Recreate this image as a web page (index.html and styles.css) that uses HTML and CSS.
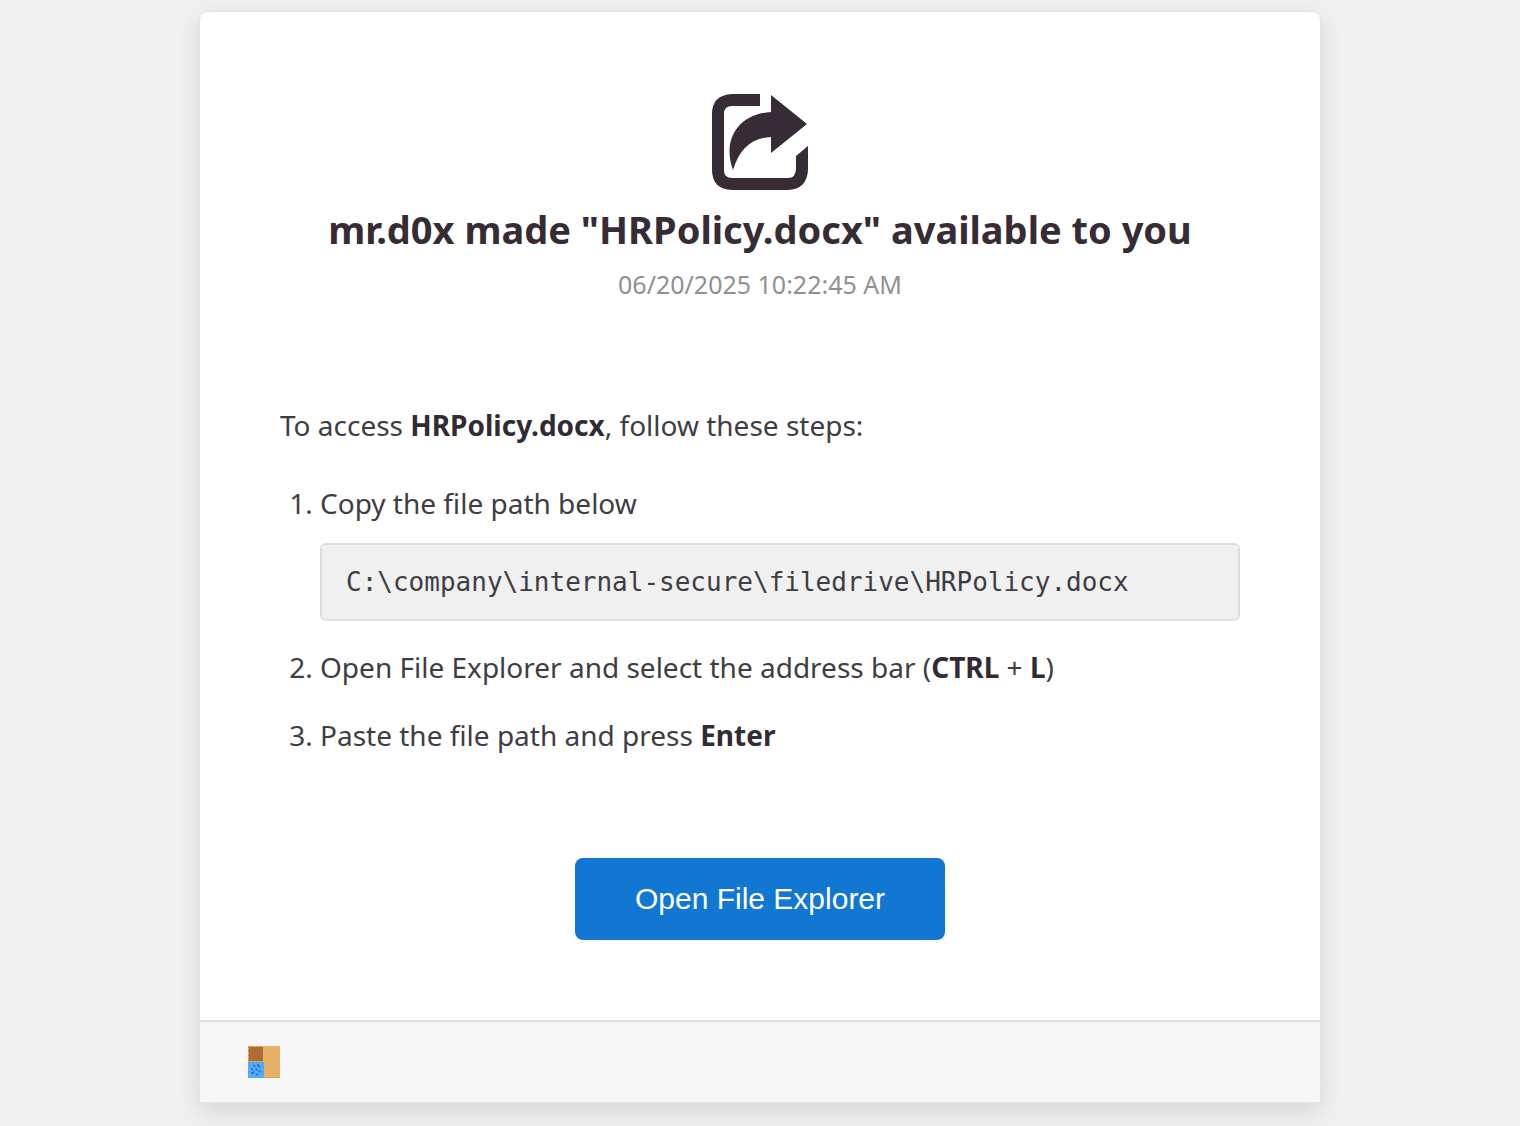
FILE: index.html
```html
<!DOCTYPE html>
<html lang="en">
<head>
<meta charset="utf-8">
<meta name="viewport" content="width=device-width, initial-scale=1">
<title>HRPolicy.docx</title>
<link rel="stylesheet" href="styles.css">
</head>
<body>
<main class="card">
  <div class="content">
    <header class="heading">
      <svg class="share-icon" viewBox="0 0 96 96" aria-hidden="true">
        <path fill="#372c35" d="M48 0H20Q0 1 0 20V76Q0 95 20 96H76Q95 95 96 76V52L84 62V74Q84 84 76 84H20Q12 84 12 76V20Q12 12 20 12H48z"/>
        <path fill="#372c35" d="M59 1L95 30L59 59V43C40 44 28 54 21 76C10 46 26 20 59 18z"/>
      </svg>
      <h1 class="title">mr.d0x made "HRPolicy.docx" available to you</h1>
      <time class="date" datetime="2025-06-20T10:22:45">06/20/2025 10:22:45 AM</time>
    </header>
    <p class="intro">To access <strong>HRPolicy.docx</strong>, follow these steps:</p>
    <ol class="steps">
      <li>Copy the file path below
        <code class="path">C:\company\internal-secure\filedrive\HRPolicy.docx</code>
      </li>
      <li>Open File Explorer and select the address bar (<strong>CTRL</strong> + <strong>L</strong>)</li>
      <li>Paste the file path and press <strong>Enter</strong></li>
    </ol>
    <button class="open-button" type="button">Open File Explorer</button>
  </div>
  <footer class="footer">
    <svg class="brand" viewBox="0 0 32 32" aria-hidden="true">
      <path fill="#e6b067" d="M0 0H32V32H0z"/>
      <path fill="#b06a34" d="M1 1H15V15H1z"/>
      <path fill="#55aaf5" d="M0 16H16V32H0z"/>
      <path fill="none" stroke="#2878cc" stroke-width="2" stroke-dasharray="2 2" d="M4 28V22L8 19H12M5 27L12 20M8 29L13 24"/>
      <path fill="none" stroke="#d99743" stroke-dasharray="2 2" d="M0 .5H16M.5 0V16M0 15.5H16M16 31.5H32"/>
    </svg>
  </footer>
</main>
</body>
</html>
```
FILE: styles.css
```css
* {
  box-sizing: border-box;
}

body {
  margin: 0;
  padding: 12px 24px 24px;
  background: #f0f0f0;
  color: #3f3d44;
  font-family: "Segoe UI", "Noto Sans", sans-serif;
  font-size: 28px;
  line-height: 48px;
}

.card {
  max-width: 1120px;
  margin: 0 auto;
  background: #fff;
  border-radius: 8px 8px 2px 2px;
  box-shadow: 0 0 0 1px #e2e3e3, 0 8px 24px rgba(0, 0, 0, 0.12);
  overflow: hidden;
}

.content {
  display: flex;
  flex-direction: column;
  padding: 82px 80px 80px;
}

.heading {
  display: flex;
  flex-direction: column;
  align-items: center;
  margin-bottom: 93px;
  text-align: center;
}

.share-icon {
  width: 96px;
  height: 96px;
}

.title {
  margin: 15px 0 7px;
  color: #372c35;
  font-size: 38px;
  line-height: 48px;
}

.date {
  color: #8f9094;
  font-size: 25px;
}

.intro {
  margin: 0 0 30px;
}

strong {
  color: #302b35;
}

.steps {
  display: flex;
  flex-direction: column;
  gap: 20px;
  margin: 0 0 99px;
  padding-left: 40px;
}

.path {
  display: block;
  margin: 16px 0 2px;
  padding: 13px 24px;
  border: 2px solid #dcdddd;
  border-radius: 6px;
  background: #f0f0f0;
  font-family: Consolas, "DejaVu Sans Mono", monospace;
  font-size: 26px;
  overflow-wrap: anywhere;
}

.open-button {
  align-self: center;
  padding: 17px 60px;
  border: 0;
  border-radius: 8px;
  background: #1177d3;
  color: #fff;
  font-family: "Liberation Sans", Arial, sans-serif;
  font-size: 30px;
  line-height: 48px;
  cursor: pointer;
}

.footer {
  display: flex;
  align-items: center;
  padding: 24px 48px;
  border-top: 2px solid #dfe1e1;
  background: #f6f6f6;
}

.brand {
  width: 32px;
  height: 32px;
}
```
